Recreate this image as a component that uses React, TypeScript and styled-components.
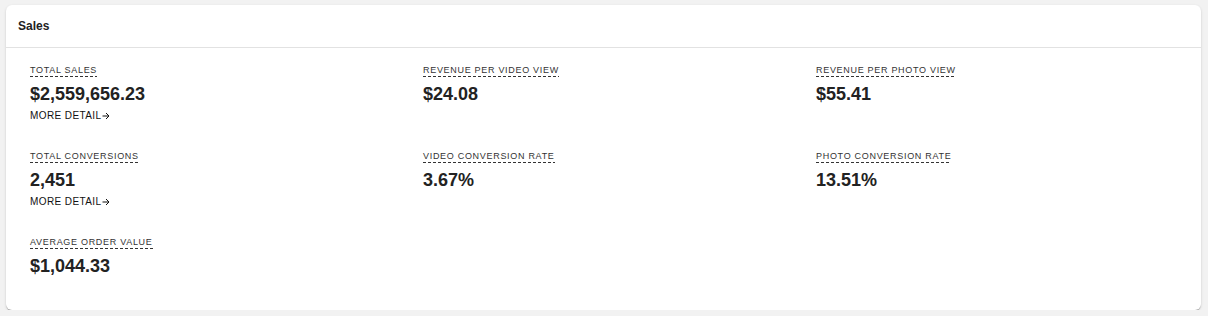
import React from "react";
import styled, { createGlobalStyle } from "styled-components";

const GlobalStyle = createGlobalStyle`
  html, body {
    margin: 0;
    background: #f2f2f2;
  }
  body {
    padding: 5px 7px 0 6px;
    font-family: "Liberation Sans", Arial, Helvetica, sans-serif;
    color: #222;
  }
`;

const Card = styled.section`
  background: #fff;
  border-radius: 6px;
  box-shadow: 0px 2px 1px -1px rgba(0, 0, 0, 0.2), 0px 1px 1px 0px rgba(0, 0, 0, 0.14),
    0px 1px 3px 0px rgba(0, 0, 0, 0.12);
  height: 305px;
  box-sizing: border-box;
  overflow: hidden;
`;

const Header = styled.header`
  padding: 13px 12px;
  border-bottom: 1px solid #e2e2e2;
  font-size: 12px;
  line-height: 16px;
  font-weight: 700;
  color: #222;
`;

const Grid = styled.div`
  display: grid;
  grid-template-columns: repeat(3, 393px);
  row-gap: 28px;
  padding: 17px 24px 0 24px;
`;

const Stat = styled.div`
  display: flex;
  flex-direction: column;
  align-items: flex-start;
`;

const Label = styled.span`
  display: inline-block;
  font-size: 9px;
  line-height: 11px;
  letter-spacing: 0.7px;
  text-transform: uppercase;
  color: #333;
  padding-bottom: 1px;
  background-image: repeating-linear-gradient(
    to right,
    #333 0 3px,
    transparent 3px 5px
  );
  background-size: 100% 1px;
  background-repeat: no-repeat;
  background-position: left bottom;
`;

const Value = styled.div`
  margin-top: 6px;
  font-size: 18px;
  line-height: 22px;
  font-weight: 700;
  color: #222;
`;

const More = styled.a`
  margin-top: 4px;
  display: inline-flex;
  align-items: center;
  gap: 1px;
  font-size: 10px;
  line-height: 14px;
  letter-spacing: 0.4px;
  color: #111;
  text-decoration: none;
  cursor: pointer;
`;

const Arrow = () => (
  <svg width="8" height="8" viewBox="0 0 8 8" fill="none" stroke="#111" strokeWidth="1">
    <path d="M0.5 4h6.5M4 1l3 3-3 3" />
  </svg>
);

type StatItem = { label: string; value: string; more?: boolean };

const stats: StatItem[] = [
  { label: "Total Sales", value: "$2,559,656.23", more: true },
  { label: "Revenue per video view", value: "$24.08" },
  { label: "Revenue per photo view", value: "$55.41" },
  { label: "Total Conversions", value: "2,451", more: true },
  { label: "Video conversion rate", value: "3.67%" },
  { label: "Photo conversion rate", value: "13.51%" },
  { label: "Average order value", value: "$1,044.33" },
];

export default function App() {
  return (
    <>
      <GlobalStyle />
      <Card>
        <Header>Sales</Header>
        <Grid>
          {stats.map((s) => (
            <Stat key={s.label}>
              <Label>{s.label}</Label>
              <Value>{s.value}</Value>
              {s.more && (
                <More>
                  MORE DETAIL
                  <Arrow />
                </More>
              )}
            </Stat>
          ))}
        </Grid>
      </Card>
    </>
  );
}
